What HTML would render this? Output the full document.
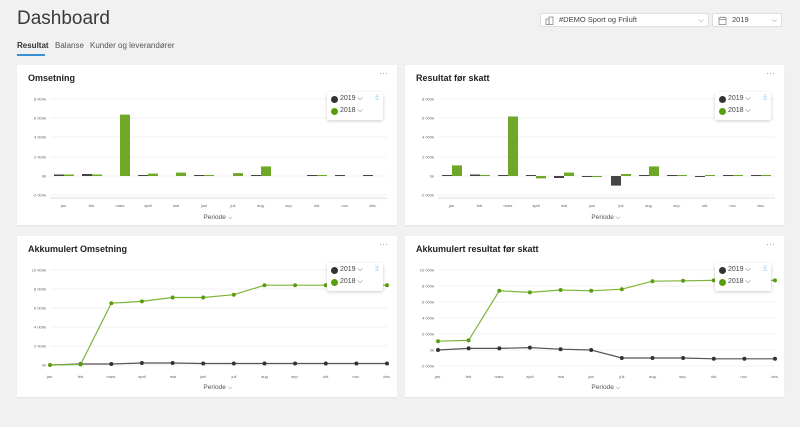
<!DOCTYPE html>
<html><head><meta charset="utf-8"><style>
*{margin:0;padding:0;box-sizing:border-box}
body{width:800px;height:427px;background:#f1f1f1;font-family:"Liberation Sans",sans-serif;position:relative;overflow:hidden;color:#333}
.h1{position:absolute;left:17px;top:8px;font-size:19px;color:#3a3a3a}
.tab{position:absolute;top:41px;font-size:8px;color:#555}
.dd{position:absolute;top:13px;height:14px;background:#fff;border:1px solid #ddd;border-radius:2px;font-size:7.5px;color:#444;line-height:12px}
.dd svg{position:absolute;top:2px}
.card{position:absolute;background:#fff;box-shadow:0 1px 1px rgba(0,0,0,.06)}
.card svg{position:absolute;left:0;top:0}
.t{position:absolute;left:11px;top:8px;font-size:9px;font-weight:bold;color:#222}
.dots{position:absolute;right:9px;top:3px;font-size:9px;color:#999}
.leg{position:absolute;width:56px;height:28px;background:#fff;box-shadow:0 1px 3px rgba(0,0,0,.2);border-radius:2px;font-size:7px;color:#444}
.leg div{position:absolute;left:4px;display:flex;align-items:center}
.leg i{display:inline-block;width:7px;height:7px;border-radius:50%;margin-right:2px}
.leg b{position:absolute;right:4px;top:3px;font-size:7px;color:#4aa3df;font-weight:normal}
</style></head><body>
<div class="h1">Dashboard</div>
<div class="tab" style="left:17px;font-weight:bold;color:#333">Resultat</div>
<div style="position:absolute;left:17px;top:54px;width:28px;height:1.5px;background:#3a8fd6"></div>
<div class="tab" style="left:55px">Balanse</div>
<div class="tab" style="left:90px">Kunder og leverandører</div>
<div class="dd" style="left:540px;width:169px;padding-left:18px">#DEMO Sport og Friluft<svg style="left:4px" width="9" height="9" viewBox="0 0 9 9" fill="none" stroke="#888" stroke-width="0.8"><rect x="1" y="3" width="3" height="5.5"/><rect x="4" y="1" width="4" height="7.5"/></svg><span style="position:absolute;right:4px;top:0;color:#888">⌵</span></div>
<div class="dd" style="left:712px;width:70px;padding-left:19px">2019<svg style="left:5px" width="9" height="9" viewBox="0 0 9 9" fill="none" stroke="#888" stroke-width="0.8"><rect x="1" y="1.5" width="7" height="7"/><line x1="1" y1="3.5" x2="8" y2="3.5"/><line x1="3" y1="0.5" x2="3" y2="2"/><line x1="6" y1="0.5" x2="6" y2="2"/></svg><span style="position:absolute;right:4px;top:0;color:#888">⌵</span></div>

<!-- card 1 -->
<div class="card" style="left:17px;top:65px;width:380px;height:160px">
<svg width="380" height="160" font-size="4" fill="#666" font-family="Liberation Sans">
<g stroke="#eee" stroke-width="0.8"><line x1="33" x2="370" y1="34" y2="34"/><line x1="33" x2="370" y1="53" y2="53"/><line x1="33" x2="370" y1="72" y2="72"/><line x1="33" x2="370" y1="92" y2="92"/><line x1="33" x2="370" y1="111" y2="111"/><line x1="33" x2="370" y1="130" y2="130"/></g>
<line x1="33" x2="370" y1="133" y2="133" stroke="#ddd"/>
<g text-anchor="end"><text x="29" y="35.5">8 000k</text><text x="29" y="54.5">6 000k</text><text x="29" y="73.5">4 000k</text><text x="29" y="93.5">2 000k</text><text x="29" y="112.5">0k</text><text x="29" y="131.5">-2 000k</text></g>
<g text-anchor="middle"><text x="47" y="142">jan.</text><text x="75" y="142">feb.</text><text x="103" y="142">mars</text><text x="131" y="142">april</text><text x="159" y="142">mai</text><text x="187" y="142">juni</text><text x="216" y="142">juli</text><text x="244" y="142">aug.</text><text x="272" y="142">sep.</text><text x="300" y="142">okt.</text><text x="328" y="142">nov.</text><text x="356" y="142">des.</text>
<text x="201" y="154" font-size="6.5" fill="#555">Periode ⌵</text></g>
<g fill="#444"><rect x="37" y="109.5" width="10" height="1.5"/><rect x="65" y="109" width="10" height="2"/><rect x="121" y="110" width="10" height="1"/><rect x="177" y="110" width="10" height="1"/><rect x="234" y="110" width="10" height="1"/><rect x="290" y="110" width="10" height="1"/><rect x="318" y="110" width="10" height="1"/><rect x="346" y="110" width="10" height="1"/></g>
<g fill="#6fa827"><rect x="47" y="109.5" width="10" height="1.5"/><rect x="75" y="109.5" width="10" height="1.5"/><rect x="103" y="49.6" width="10" height="61.4"/><rect x="131" y="108.6" width="10" height="2.4"/><rect x="159" y="107.6" width="10" height="3.4"/><rect x="187" y="110" width="10" height="1"/><rect x="216" y="108.1" width="10" height="2.9"/><rect x="244" y="101.4" width="10" height="9.6"/><rect x="300" y="110" width="10" height="1"/></g>
</svg>
<div class="t">Omsetning</div><div class="dots">···</div>
<div class="leg" style="left:310px;top:27px"><div style="top:3px"><i style="background:#333"></i>2019 ⌵</div><div style="top:15px"><i style="background:#5a9e0f"></i>2018 ⌵</div><b>⁞⁞</b></div>
</div>

<!-- card 2 -->
<div class="card" style="left:405px;top:65px;width:379px;height:160px">
<svg width="379" height="160" font-size="4" fill="#666" font-family="Liberation Sans">
<g stroke="#eee" stroke-width="0.8"><line x1="33" x2="370" y1="34" y2="34"/><line x1="33" x2="370" y1="53" y2="53"/><line x1="33" x2="370" y1="72" y2="72"/><line x1="33" x2="370" y1="92" y2="92"/><line x1="33" x2="370" y1="111" y2="111"/><line x1="33" x2="370" y1="130" y2="130"/></g>
<line x1="33" x2="370" y1="133" y2="133" stroke="#ddd"/>
<g text-anchor="end"><text x="29" y="35.5">8 000k</text><text x="29" y="54.5">6 000k</text><text x="29" y="73.5">4 000k</text><text x="29" y="93.5">2 000k</text><text x="29" y="112.5">0k</text><text x="29" y="131.5">-2 000k</text></g>
<g text-anchor="middle"><text x="47" y="142">jan.</text><text x="75" y="142">feb.</text><text x="103" y="142">mars</text><text x="131" y="142">april</text><text x="159" y="142">mai</text><text x="187" y="142">juni</text><text x="216" y="142">juli</text><text x="244" y="142">aug.</text><text x="272" y="142">sep.</text><text x="300" y="142">okt.</text><text x="328" y="142">nov.</text><text x="356" y="142">des.</text>
<text x="201" y="154" font-size="6.5" fill="#555">Periode ⌵</text></g>
<g fill="#444"><rect x="37" y="110" width="10" height="1"/><rect x="65" y="109.5" width="10" height="1.5"/><rect x="93" y="110" width="10" height="1"/><rect x="121" y="110" width="10" height="1"/><rect x="149" y="111" width="10" height="2"/><rect x="177" y="111" width="10" height="1"/><rect x="206" y="111" width="10" height="9.6"/><rect x="234" y="110" width="10" height="1"/><rect x="262" y="110" width="10" height="1"/><rect x="290" y="111" width="10" height="1"/><rect x="318" y="110" width="10" height="1"/><rect x="346" y="110" width="10" height="1"/></g>
<g fill="#6fa827"><rect x="47" y="100.4" width="10" height="10.6"/><rect x="75" y="110" width="10" height="1"/><rect x="103" y="51.5" width="10" height="59.5"/><rect x="131" y="111" width="10" height="2.4"/><rect x="159" y="107.6" width="10" height="3.4"/><rect x="187" y="111" width="10" height="1"/><rect x="216" y="109" width="10" height="2"/><rect x="244" y="101.4" width="10" height="9.6"/><rect x="272" y="110" width="10" height="1"/><rect x="300" y="110" width="10" height="1"/><rect x="328" y="110" width="10" height="1"/><rect x="356" y="110" width="10" height="1"/></g>
</svg>
<div class="t">Resultat før skatt</div><div class="dots">···</div>
<div class="leg" style="left:310px;top:27px"><div style="top:3px"><i style="background:#333"></i>2019 ⌵</div><div style="top:15px"><i style="background:#5a9e0f"></i>2018 ⌵</div><b>⁞⁞</b></div>
</div>

<!-- card 3 -->
<div class="card" style="left:17px;top:236px;width:380px;height:161px">
<svg width="380" height="161" font-size="4" fill="#666" font-family="Liberation Sans">
<g stroke="#eee" stroke-width="0.8"><line x1="33" x2="370" y1="34" y2="34"/><line x1="33" x2="370" y1="53" y2="53"/><line x1="33" x2="370" y1="72" y2="72"/><line x1="33" x2="370" y1="91" y2="91"/><line x1="33" x2="370" y1="110" y2="110"/><line x1="33" x2="370" y1="129" y2="129"/></g>
<g text-anchor="end"><text x="29" y="35.5">10 000k</text><text x="29" y="54.5">8 000k</text><text x="29" y="73.5">6 000k</text><text x="29" y="92.5">4 000k</text><text x="29" y="111.5">2 000k</text><text x="29" y="130.5">0k</text></g>
<g text-anchor="middle"><text x="33" y="142">jan.</text><text x="64" y="142">feb.</text><text x="94" y="142">mars</text><text x="125" y="142">april</text><text x="156" y="142">mai</text><text x="186" y="142">juni</text><text x="217" y="142">juli</text><text x="248" y="142">aug.</text><text x="278" y="142">sep.</text><text x="309" y="142">okt.</text><text x="339" y="142">nov.</text><text x="370" y="142">des.</text>
<text x="201" y="153" font-size="6.5" fill="#555">Periode ⌵</text></g>
<polyline fill="none" stroke="#555" stroke-width="1.2" points="33,129 63.6,128 94.3,128 124.9,127 155.6,127 186.2,127.5 216.8,127.5 247.5,127.5 278.1,127.5 308.8,127.5 339.4,127.5 370,127.5"/>
<g fill="#333"><circle cx="63.6" cy="128" r="2"/><circle cx="94.3" cy="128" r="2"/><circle cx="124.9" cy="127" r="2"/><circle cx="155.6" cy="127" r="2"/><circle cx="186.2" cy="127.5" r="2"/><circle cx="216.8" cy="127.5" r="2"/><circle cx="247.5" cy="127.5" r="2"/><circle cx="278.1" cy="127.5" r="2"/><circle cx="308.8" cy="127.5" r="2"/><circle cx="339.4" cy="127.5" r="2"/><circle cx="370" cy="127.5" r="2"/></g>
<polyline fill="none" stroke="#7db53a" stroke-width="1.2" points="33,129 63.6,128.5 94.3,67.2 124.9,65.4 155.6,61.5 186.2,61.5 216.8,58.7 247.5,49.2 278.1,49.2 308.8,49.2 339.4,49.2 370,49.2"/>
<g fill="#5a9e0f"><circle cx="33" cy="129" r="2"/><circle cx="63.6" cy="128.5" r="2"/><circle cx="94.3" cy="67.2" r="2"/><circle cx="124.9" cy="65.4" r="2"/><circle cx="155.6" cy="61.5" r="2"/><circle cx="186.2" cy="61.5" r="2"/><circle cx="216.8" cy="58.7" r="2"/><circle cx="247.5" cy="49.2" r="2"/><circle cx="278.1" cy="49.2" r="2"/><circle cx="308.8" cy="49.2" r="2"/><circle cx="370" cy="49.2" r="2"/></g>
</svg>
<div class="t">Akkumulert Omsetning</div><div class="dots">···</div>
<div class="leg" style="left:310px;top:27px"><div style="top:3px"><i style="background:#333"></i>2019 ⌵</div><div style="top:15px"><i style="background:#5a9e0f"></i>2018 ⌵</div><b>⁞⁞</b></div>
</div>

<!-- card 4 -->
<div class="card" style="left:405px;top:236px;width:379px;height:161px">
<svg width="379" height="161" font-size="4" fill="#666" font-family="Liberation Sans">
<g stroke="#eee" stroke-width="0.8"><line x1="33" x2="370" y1="34" y2="34"/><line x1="33" x2="370" y1="50" y2="50"/><line x1="33" x2="370" y1="66" y2="66"/><line x1="33" x2="370" y1="82" y2="82"/><line x1="33" x2="370" y1="98" y2="98"/><line x1="33" x2="370" y1="114" y2="114"/><line x1="33" x2="370" y1="130" y2="130"/></g>
<g text-anchor="end"><text x="29" y="35.5">10 000k</text><text x="29" y="51.5">8 000k</text><text x="29" y="67.5">6 000k</text><text x="29" y="83.5">4 000k</text><text x="29" y="99.5">2 000k</text><text x="29" y="115.5">0k</text><text x="29" y="131.5">-2 000k</text></g>
<g text-anchor="middle"><text x="33" y="142">jan.</text><text x="64" y="142">feb.</text><text x="94" y="142">mars</text><text x="125" y="142">april</text><text x="156" y="142">mai</text><text x="186" y="142">juni</text><text x="217" y="142">juli</text><text x="248" y="142">aug.</text><text x="278" y="142">sep.</text><text x="309" y="142">okt.</text><text x="339" y="142">nov.</text><text x="370" y="142">des.</text>
<text x="201" y="153" font-size="6.5" fill="#555">Periode ⌵</text></g>
<polyline fill="none" stroke="#555" stroke-width="1.2" points="33,114 63.6,112.4 94.3,112.4 124.9,111.6 155.6,113.2 186.2,114 216.8,122 247.5,122 278.1,122 308.8,122.8 339.4,122.8 370,122.8"/>
<g fill="#333"><circle cx="33" cy="114" r="2"/><circle cx="63.6" cy="112.4" r="2"/><circle cx="94.3" cy="112.4" r="2"/><circle cx="124.9" cy="111.6" r="2"/><circle cx="155.6" cy="113.2" r="2"/><circle cx="186.2" cy="114" r="2"/><circle cx="216.8" cy="122" r="2"/><circle cx="247.5" cy="122" r="2"/><circle cx="278.1" cy="122" r="2"/><circle cx="308.8" cy="122.8" r="2"/><circle cx="339.4" cy="122.8" r="2"/><circle cx="370" cy="122.8" r="2"/></g>
<polyline fill="none" stroke="#7db53a" stroke-width="1.2" points="33,105.2 63.6,104.4 94.3,54.8 124.9,56.4 155.6,54 186.2,54.8 216.8,53.2 247.5,45.2 278.1,44.8 308.8,44.4 339.4,44.4 370,44.4"/>
<g fill="#5a9e0f"><circle cx="33" cy="105.2" r="2"/><circle cx="63.6" cy="104.4" r="2"/><circle cx="94.3" cy="54.8" r="2"/><circle cx="124.9" cy="56.4" r="2"/><circle cx="155.6" cy="54" r="2"/><circle cx="186.2" cy="54.8" r="2"/><circle cx="216.8" cy="53.2" r="2"/><circle cx="247.5" cy="45.2" r="2"/><circle cx="278.1" cy="44.8" r="2"/><circle cx="308.8" cy="44.4" r="2"/><circle cx="370" cy="44.4" r="2"/></g>
</svg>
<div class="t">Akkumulert resultat før skatt</div><div class="dots">···</div>
<div class="leg" style="left:310px;top:27px"><div style="top:3px"><i style="background:#333"></i>2019 ⌵</div><div style="top:15px"><i style="background:#5a9e0f"></i>2018 ⌵</div><b>⁞⁞</b></div>
</div>
</body></html>
